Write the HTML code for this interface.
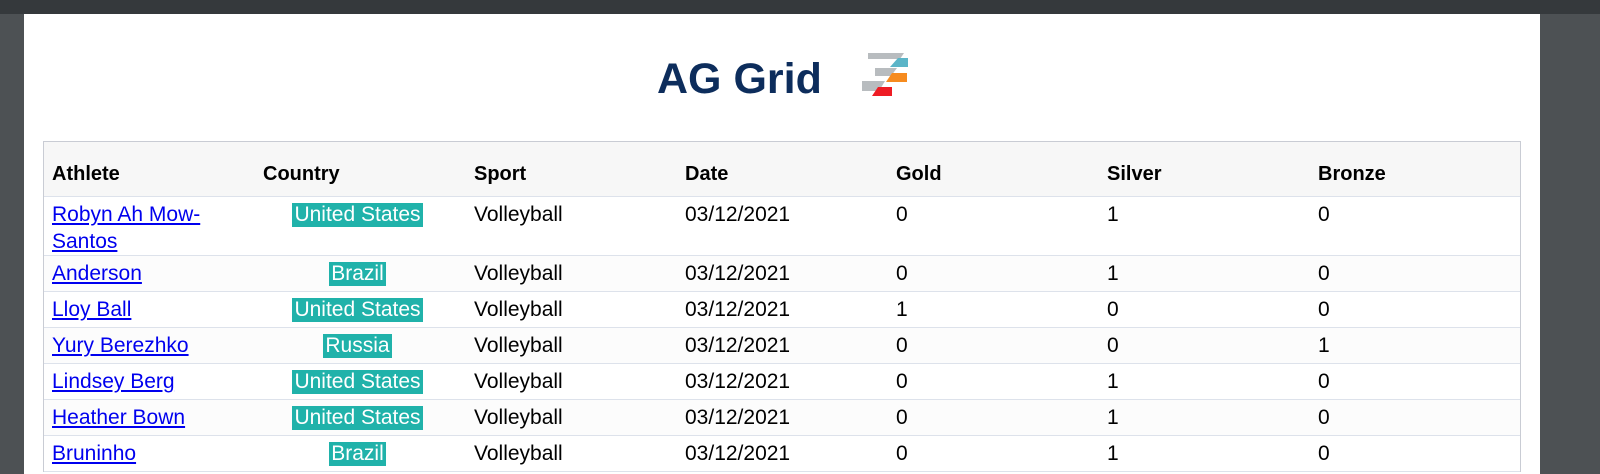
<!DOCTYPE html>
<html><head><style>
body{margin:0;width:1600px;height:461px;overflow:hidden;background:#4d5154;font-family:"Liberation Sans",sans-serif;}
.top{position:absolute;left:0;top:0;width:1600px;height:14px;background:#35393c;}
.page{position:absolute;left:24px;top:14px;width:1516px;height:460px;background:#fff;}
.logo{position:absolute;left:657px;top:55px;font-size:43px;font-weight:bold;color:#0d2d5c;}
.grid{position:absolute;left:43px;top:141px;width:1476px;height:330px;border:1px solid #c9ccd4;border-bottom:none;}
.row{position:absolute;left:0;width:1476px;border-bottom:1px solid #dde2eb;font-size:21px;color:#000;}
.hdr{top:0;height:54px;background:#f7f7f7;font-weight:bold;font-size:20px;}
.c{position:absolute;top:0;width:195px;}
.row .c{line-height:27px;padding-top:4px}
.hdr .c{padding-top:19px;line-height:26px}
a{color:#00e;text-decoration:underline;}
.b{background:#20b2aa;color:#fff;padding:0 2px;line-height:24px;display:inline-block}
.ctr{text-align:center;width:211px;}
</style></head><body>
<div class="top"></div>
<div class="page"></div>
<div class="logo">AG Grid</div>
<svg style="position:absolute;left:840px;top:48px" width="75" height="50">
<polygon points="28,5 64,5 60,11 28,11" fill="#b8bcbf"/>
<polygon points="58,10 68,10 68,19 50,19" fill="#5bb5c8"/>
<polygon points="35,20 57,20 51,28 35,28" fill="#b8bcbf"/>
<polygon points="52,25 67,25 67,34 46,34" fill="#f68b1f"/>
<polygon points="22,33 45,33 39,43 22,43" fill="#b8bcbf"/>
<polygon points="38,39 52,39 52,48 32,48" fill="#ee1c24"/>
</svg>
<div class="grid">
<div class="row hdr"><div class="c" style="left:8px">Athlete</div><div class="c" style="left:219px">Country</div><div class="c" style="left:430px">Sport</div><div class="c" style="left:641px">Date</div><div class="c" style="left:852px">Gold</div><div class="c" style="left:1063px">Silver</div><div class="c" style="left:1274px">Bronze</div></div>
<div class="row" style="top:55px;height:58px;background:#fff"><div class="c" style="left:8px;width:172px"><a>Robyn Ah Mow-Santos</a></div><div class="c ctr" style="left:208px"><span class="b">United States</span></div><div class="c" style="left:430px">Volleyball</div><div class="c" style="left:641px">03/12/2021</div><div class="c" style="left:852px">0</div><div class="c" style="left:1063px">1</div><div class="c" style="left:1274px">0</div></div>
<div class="row" style="top:114px;height:35px;background:#fcfcfc"><div class="c" style="left:8px"><a>Anderson</a></div><div class="c ctr" style="left:208px"><span class="b">Brazil</span></div><div class="c" style="left:430px">Volleyball</div><div class="c" style="left:641px">03/12/2021</div><div class="c" style="left:852px">0</div><div class="c" style="left:1063px">1</div><div class="c" style="left:1274px">0</div></div>
<div class="row" style="top:150px;height:35px;background:#fff"><div class="c" style="left:8px"><a>Lloy Ball</a></div><div class="c ctr" style="left:208px"><span class="b">United States</span></div><div class="c" style="left:430px">Volleyball</div><div class="c" style="left:641px">03/12/2021</div><div class="c" style="left:852px">1</div><div class="c" style="left:1063px">0</div><div class="c" style="left:1274px">0</div></div>
<div class="row" style="top:186px;height:35px;background:#fcfcfc"><div class="c" style="left:8px"><a>Yury Berezhko</a></div><div class="c ctr" style="left:208px"><span class="b">Russia</span></div><div class="c" style="left:430px">Volleyball</div><div class="c" style="left:641px">03/12/2021</div><div class="c" style="left:852px">0</div><div class="c" style="left:1063px">0</div><div class="c" style="left:1274px">1</div></div>
<div class="row" style="top:222px;height:35px;background:#fff"><div class="c" style="left:8px"><a>Lindsey Berg</a></div><div class="c ctr" style="left:208px"><span class="b">United States</span></div><div class="c" style="left:430px">Volleyball</div><div class="c" style="left:641px">03/12/2021</div><div class="c" style="left:852px">0</div><div class="c" style="left:1063px">1</div><div class="c" style="left:1274px">0</div></div>
<div class="row" style="top:258px;height:35px;background:#fcfcfc"><div class="c" style="left:8px"><a>Heather Bown</a></div><div class="c ctr" style="left:208px"><span class="b">United States</span></div><div class="c" style="left:430px">Volleyball</div><div class="c" style="left:641px">03/12/2021</div><div class="c" style="left:852px">0</div><div class="c" style="left:1063px">1</div><div class="c" style="left:1274px">0</div></div>
<div class="row" style="top:294px;height:35px;background:#fff"><div class="c" style="left:8px"><a>Bruninho</a></div><div class="c ctr" style="left:208px"><span class="b">Brazil</span></div><div class="c" style="left:430px">Volleyball</div><div class="c" style="left:641px">03/12/2021</div><div class="c" style="left:852px">0</div><div class="c" style="left:1063px">1</div><div class="c" style="left:1274px">0</div></div>
</div>
</body></html>
